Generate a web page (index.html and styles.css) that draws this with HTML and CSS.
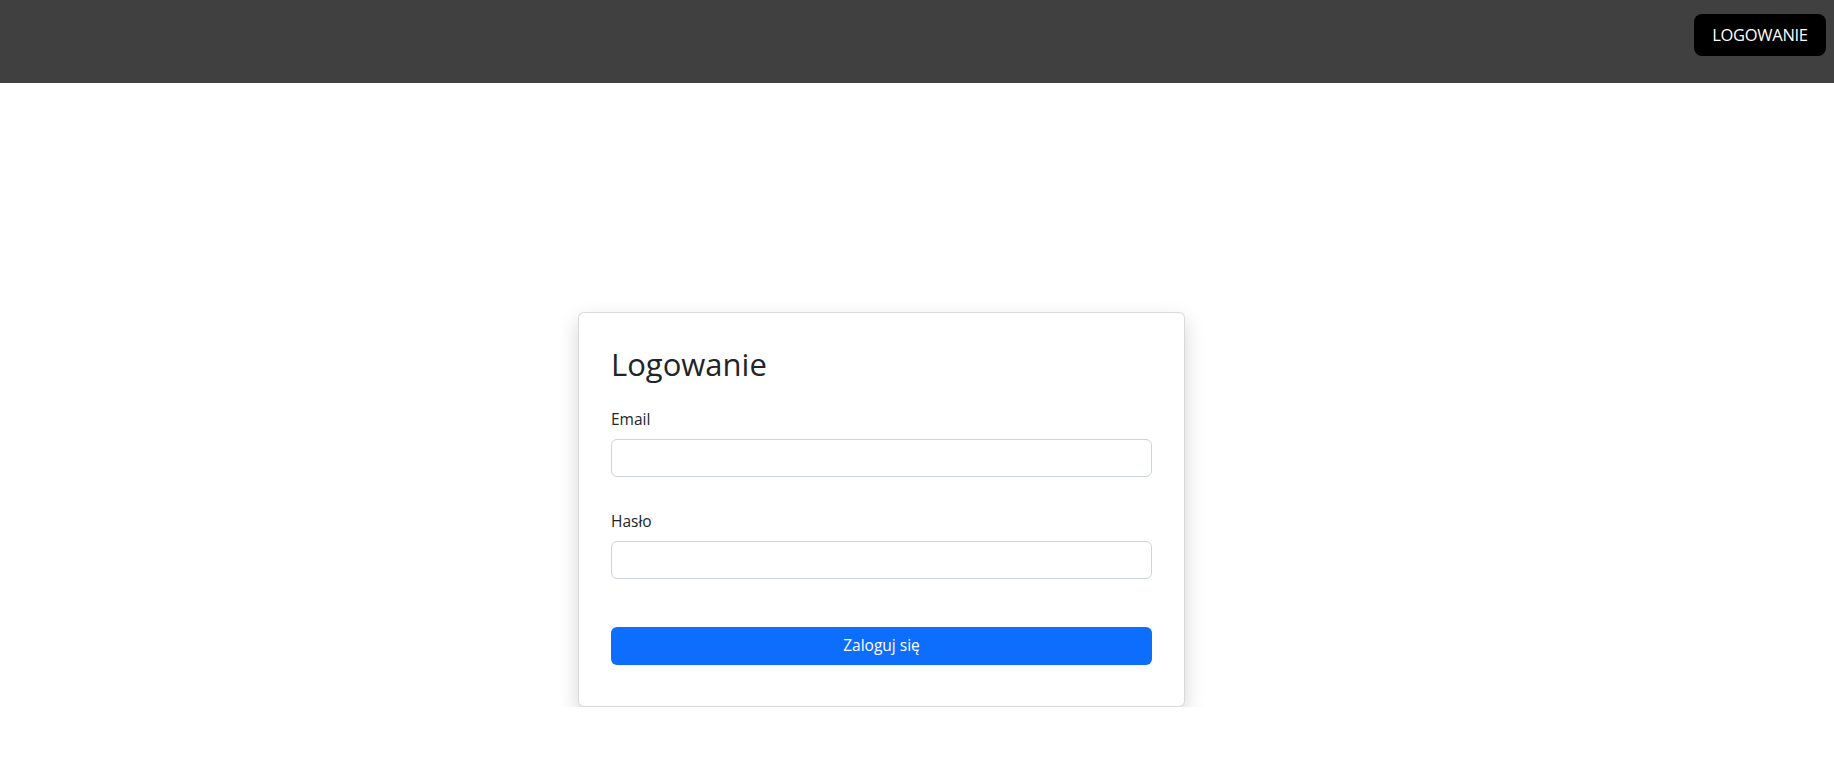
FILE: index.html
```html
<!DOCTYPE html>
<html lang="pl">
<head>
<meta charset="utf-8">
<title>Logowanie</title>
<link rel="stylesheet" href="styles.css">
</head>
<body>
<header class="topbar">
  <a class="login-btn" href="#">LOGOWANIE</a>
</header>
<main class="main">
  <section class="card">
    <h2 class="card-title">Logowanie</h2>
    <form class="form">
      <div class="field">
        <label class="label" for="email">Email</label>
        <input class="input" id="email" type="email">
      </div>
      <div class="field">
        <label class="label" for="pass">Hasło</label>
        <input class="input" id="pass" type="password">
      </div>
      <button class="submit" type="button">Zaloguj się</button>
    </form>
  </section>
</main>
</body>
</html>
```

FILE: styles.css
```css
* { box-sizing: border-box; }
html, body { margin: 0; padding: 0; }
body {
  font-family: "Open Sans", "Noto Sans", sans-serif;
  font-size: 15px;
  line-height: 1.5;
  color: #212529;
  background: #fff;
}
.topbar {
  height: 83px;
  background: #404040;
  display: flex;
  justify-content: flex-end;
  align-items: flex-start;
  padding: 14px 8px 0 0;
}
.login-btn {
  display: flex;
  align-items: center;
  justify-content: center;
  width: 132px;
  height: 42px;
  background: #000;
  color: #fff;
  border-radius: 8px;
  text-decoration: none;
  font-size: 16.5px;
  letter-spacing: -0.3px;
}
.main {
  padding: 229px 0 0 578px;
}
.card {
  width: 607px;
  border: 1px solid rgba(0,0,0,0.15);
  border-radius: 6px;
  background: #fff;
  box-shadow: 0 8px 20px rgba(0,0,0,0.17);
  padding: 32px 32px 41px;
}
.card-title {
  margin: 0 0 24px;
  font-size: 31px;
  font-weight: 400;
  line-height: 38px;
  letter-spacing: 0;
}
.form { display: flex; flex-direction: column; }
.field { display: flex; flex-direction: column; margin-bottom: 32px; }
.field + .field { margin-bottom: 48px; }
.label {
  display: block;
  margin-bottom: 8px;
  line-height: 24px;
  font-size: 15.5px;
}
.input {
  height: 38px;
  border: 1px solid #ced4da;
  border-radius: 6px;
  padding: 6px 12px;
  font: inherit;
  background: #fff;
}
.submit {
  height: 38px;
  border: 0;
  border-radius: 6px;
  background: #0d6efd;
  color: #fff;
  font: inherit;
  font-size: 15.5px;
}
```
